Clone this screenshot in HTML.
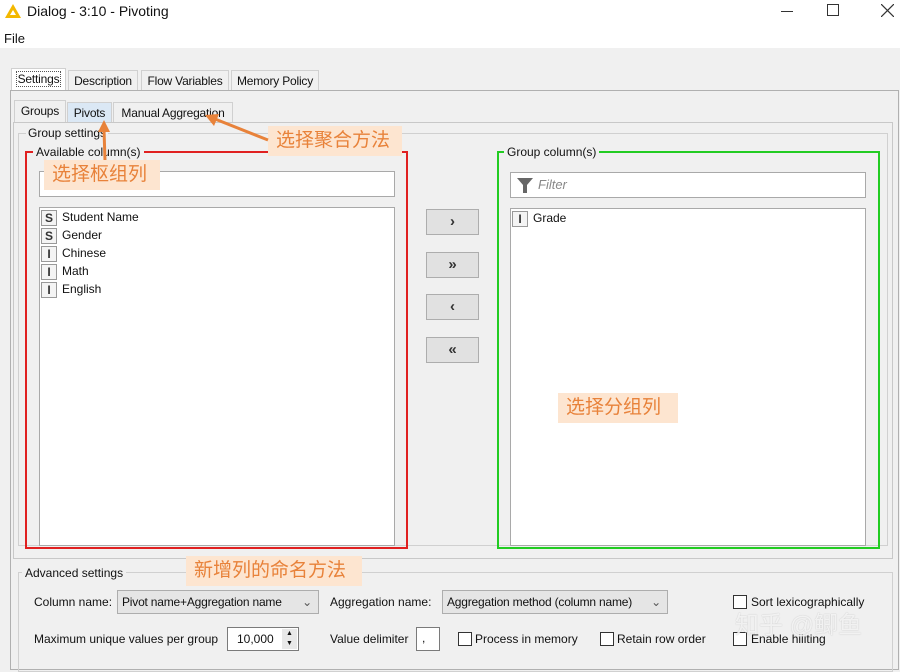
<!DOCTYPE html>
<html><head><meta charset="utf-8"><style>
*{box-sizing:border-box;margin:0;padding:0}
body{width:900px;height:660px;overflow:hidden;background:#f0f0f0;font-family:"Liberation Sans","Noto Sans CJK SC",sans-serif;font-size:12px;color:#111;position:relative}
.a{position:absolute}
.t{position:absolute;white-space:nowrap}
.box{position:absolute;background:#fff;border:1px solid #a9a9a9}
.tab{position:absolute;border:1px solid #d0d0d0;border-bottom:none;background:#f0f0f0;text-align:center;line-height:20px;font-size:12px;letter-spacing:-0.2px}
.btn{position:absolute;left:426px;width:53px;height:26px;background:#e1e1e1;border:1px solid #adadad;text-align:center;line-height:24px;font-size:15px;font-weight:bold;color:#333}
.ic{display:inline-block;width:16px;height:16px;border:1px solid #999;text-align:center;line-height:15px;font-weight:bold;font-size:12px;margin-right:5px;vertical-align:middle;background:#f4f4f4;color:#333}
.row{position:absolute;left:1px;height:18px;line-height:18px;font-size:12px}
.ann{position:absolute;background:#fde5d0;color:#e8823a;font-size:19px;line-height:30px;padding:0 8px;white-space:nowrap}
.cb{position:absolute;width:14px;height:14px;border:1px solid #333;background:#fff}
.combo{position:absolute;background:#e5e5e5;border:1px solid #adadad;height:24px;line-height:22px;padding-left:4px;font-size:12px;letter-spacing:-0.2px}
</style></head><body>
<div class="a" style="left:0;top:0;width:900px;height:48px;background:#fff"></div>
<svg class="a" style="left:4px;top:3px" width="18" height="16"><polygon points="9,1 17,15 1,15" fill="#f3b800"/><polygon points="9,7 12,12 6,12" fill="#fff"/></svg>
<div class="t" style="left:27px;top:3px;font-size:14px">Dialog - 3:10 - Pivoting</div>
<div class="a" style="left:781px;top:11px;width:12px;height:1px;background:#333"></div>
<div class="a" style="left:827px;top:4px;width:12px;height:12px;border:1px solid #333"></div>
<svg class="a" style="left:881px;top:4px" width="13" height="13"><path d="M0,0L13,13M13,0L0,13" stroke="#333" stroke-width="1.2"/></svg>
<div class="t" style="left:4px;top:31px;font-size:13px">File</div>

<div class="tab" style="left:11px;top:68px;width:55px;height:22px;background:#fff"><span style="border:1px dotted #555;padding:0 1px">Settings</span></div>
<div class="tab" style="left:68px;top:70px;width:70px">Description</div>
<div class="tab" style="left:141px;top:70px;width:88px">Flow Variables</div>
<div class="tab" style="left:231px;top:70px;width:88px">Memory Policy</div>
<div class="a" style="left:10px;top:90px;width:889px;height:580px;border:1px solid #b0b0b0;background:#f0f0f0"></div>

<div class="tab" style="left:14px;top:100px;width:52px;height:22px">Groups</div>
<div class="tab" style="left:67px;top:102px;width:45px;background:#dbe8f5">Pivots</div>
<div class="tab" style="left:113px;top:102px;width:120px">Manual Aggregation</div>
<div class="a" style="left:13px;top:122px;width:880px;height:437px;border:1px solid #c8c8c8"></div>
<div class="a" style="left:18px;top:133px;width:870px;height:413px;border:1px solid #d0d0d0"></div>
<div class="t" style="left:26px;top:126px;background:#f0f0f0;padding:0 2px">Group settings</div>

<div class="a" style="left:25px;top:151px;width:383px;height:398px;border:2px solid #e02020"></div>
<div class="t" style="left:33px;top:145px;background:#f0f0f0;padding:0 3px">Available column(s)</div>
<div class="box" style="left:39px;top:171px;width:356px;height:26px"></div>
<div class="box" style="left:39px;top:207px;width:356px;height:339px">
<div class="row" style="top:0"><span class="ic">S</span>Student Name</div>
<div class="row" style="top:18px"><span class="ic">S</span>Gender</div>
<div class="row" style="top:36px"><span class="ic">I</span>Chinese</div>
<div class="row" style="top:54px"><span class="ic">I</span>Math</div>
<div class="row" style="top:72px"><span class="ic">I</span>English</div>
</div>

<div class="btn" style="top:209px">›</div>
<div class="btn" style="top:252px">»</div>
<div class="btn" style="top:294px">‹</div>
<div class="btn" style="top:337px">«</div>

<div class="a" style="left:497px;top:151px;width:383px;height:398px;border:2px solid #22cc22"></div>
<div class="t" style="left:504px;top:145px;background:#f0f0f0;padding:0 3px">Group column(s)</div>
<div class="box" style="left:510px;top:172px;width:356px;height:26px"><svg class="a" style="left:6px;top:5px" width="16" height="15"><path d="M0,0H16L10,7V15H6V7Z" fill="#666"/></svg><span class="t" style="left:27px;top:4px;font-style:italic;color:#888;font-size:13px">Filter</span></div>
<div class="box" style="left:510px;top:208px;width:356px;height:338px">
<div class="row" style="top:0"><span class="ic">I</span>Grade</div>
</div>

<div class="a" style="left:18px;top:572px;width:875px;height:100px;border:1px solid #d0d0d0"></div>
<div class="t" style="left:22px;top:566px;background:#f0f0f0;padding:0 3px">Advanced settings</div>
<div class="t" style="left:34px;top:595px">Column name:</div>
<div class="combo" style="left:117px;top:590px;width:202px">Pivot name+Aggregation name<span class="t" style="right:6px;top:0;color:#555">⌄</span></div>
<div class="t" style="left:330px;top:595px">Aggregation name:</div>
<div class="combo" style="left:442px;top:590px;width:226px">Aggregation method (column name)<span class="t" style="right:6px;top:0;color:#555">⌄</span></div>
<div class="cb" style="left:733px;top:595px"></div><div class="t" style="left:751px;top:595px">Sort lexicographically</div>
<div class="t" style="left:34px;top:632px">Maximum unique values per group</div>
<div class="box" style="left:227px;top:627px;width:72px;height:24px;border-color:#7a7a7a"><span class="t" style="left:9px;top:4px">10,000</span><span class="a" style="right:1px;top:1px;width:15px;height:20px;background:#e8e8e8;font-size:7px;line-height:10px;text-align:center">▲<br>▼</span></div>
<div class="t" style="left:330px;top:632px">Value delimiter</div>
<div class="box" style="left:416px;top:627px;width:24px;height:24px;border-color:#7a7a7a"><span class="t" style="left:5px;top:3px">,</span></div>
<div class="cb" style="left:458px;top:632px"></div><div class="t" style="left:475px;top:632px">Process in memory</div>
<div class="cb" style="left:600px;top:632px"></div><div class="t" style="left:617px;top:632px">Retain row order</div>
<div class="cb" style="left:733px;top:632px"></div><div class="t" style="left:751px;top:632px">Enable hiliting</div>
<div class="t" style="left:735px;top:605px;font-size:24px;color:rgba(255,255,255,0.8);text-shadow:0 0 1px rgba(120,120,120,0.5)">知乎 @鲫鱼</div>

<div class="ann" style="left:268px;top:126px;width:134px">选择聚合方法</div>
<div class="ann" style="left:44px;top:160px;width:116px">选择枢组列</div>
<div class="ann" style="left:558px;top:393px;width:120px">选择分组列</div>
<div class="ann" style="left:186px;top:556px;width:176px">新增列的命名方法</div>
<svg class="a" style="left:0;top:0" width="900" height="200"><g stroke="#e8823a" stroke-width="3" fill="#e8823a"><line x1="105" y1="160" x2="104" y2="130"/><polygon points="104,120 98,132 110,132" stroke="none"/><line x1="268" y1="140" x2="215" y2="119"/><polygon points="205,115 214,126 219,114" stroke="none"/></g></svg>
</body></html>
